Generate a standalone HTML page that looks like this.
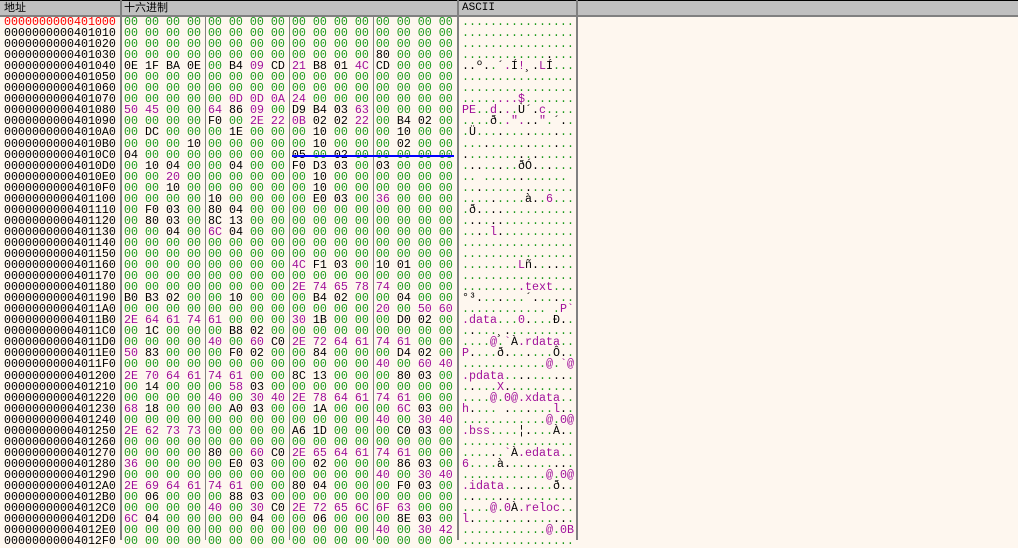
<!DOCTYPE html>
<html><head><meta charset="utf-8"><style>
*{margin:0;padding:0;box-sizing:border-box}
body{width:1018px;height:540px;overflow:hidden;background:#fef7ef;font-family:"Liberation Mono",monospace;font-size:11.67px;position:relative}
.hd{position:absolute;left:0;top:0;width:1018px;height:17px;background:#c0c0c0;border-top:1px solid #000;border-bottom:2px solid #808080}
.hd span{position:absolute;top:0;font-family:"Liberation Sans","Noto Sans CJK SC",sans-serif;font-size:11px;line-height:14px;color:#000}
.vl{position:absolute;top:0;width:1px;background:#808080}
.rows{position:absolute;left:0;top:17px}
.r{height:11.05px;line-height:11px;position:relative;white-space:pre;width:1018px}
.a{position:absolute;left:4px;color:#000}
.h{position:absolute;left:124px;color:#1d9a1d}
.s{position:absolute;left:462px;color:#1d9a1d}
i{font-style:normal;color:#a0109a}
b{font-weight:normal;color:#000}
.red{color:#ff0000}
.ul{position:absolute;left:292px;top:155px;width:162px;height:2px;background:#0000ff}
</style></head><body>
<div class="hd"><span style="left:4px">地址</span><span style="left:124px">十六进制</span><span style="left:462px;font-family:'Liberation Mono',monospace">ASCII</span></div>
<div class="vl" style="left:120px;height:540px;width:2px"></div>
<div class="vl" style="left:457px;height:540px;width:2px"></div>
<div class="vl" style="left:576px;height:540px;width:2px"></div>
<div class="vl" style="left:205px;top:16px;height:524px"></div>
<div class="vl" style="left:289px;top:16px;height:524px"></div>
<div class="vl" style="left:373px;top:16px;height:524px"></div>
<div class="rows">
<div class="r"><span class="a red">0000000000401000</span><span class="h">00 00 00 00 00 00 00 00 00 00 00 00 00 00 00 00</span><span class="s">................</span></div>
<div class="r"><span class="a">0000000000401010</span><span class="h">00 00 00 00 00 00 00 00 00 00 00 00 00 00 00 00</span><span class="s">................</span></div>
<div class="r"><span class="a">0000000000401020</span><span class="h">00 00 00 00 00 00 00 00 00 00 00 00 00 00 00 00</span><span class="s">................</span></div>
<div class="r"><span class="a">0000000000401030</span><span class="h">00 00 00 00 00 00 00 00 00 00 00 00 <b>80</b> 00 00 00</span><span class="s">............<b>.</b>...</span></div>
<div class="r"><span class="a">0000000000401040</span><span class="h"><b>0E 1F BA 0E</b> 00 <b>B4</b> <i>09</i> <b>CD</b> <i>21</i> <b>B8 01</b> <i>4C</i> <b>CD</b> 00 00 00</span><span class="s"><b>..º.</b>.<b>´</b><i>.</i><b>Í</b><i>!</i><b>¸.</b><i>L</i><b>Í</b>...</span></div>
<div class="r"><span class="a">0000000000401050</span><span class="h">00 00 00 00 00 00 00 00 00 00 00 00 00 00 00 00</span><span class="s">................</span></div>
<div class="r"><span class="a">0000000000401060</span><span class="h">00 00 00 00 00 00 00 00 00 00 00 00 00 00 00 00</span><span class="s">................</span></div>
<div class="r"><span class="a">0000000000401070</span><span class="h">00 00 00 00 00 <i>0D 0D 0A 24</i> 00 00 00 00 00 00 00</span><span class="s">.....<i>...$</i>.......</span></div>
<div class="r"><span class="a">0000000000401080</span><span class="h"><i>50 45</i> 00 00 <i>64</i> <b>86</b> <i>09</i> 00 <b>D9 B4 03</b> <i>63</i> 00 00 00 00</span><span class="s"><i>PE</i>..<i>d</i><b>.</b><i>.</i>.<b>Ù´.</b><i>c</i>....</span></div>
<div class="r"><span class="a">0000000000401090</span><span class="h">00 00 00 00 <b>F0</b> 00 <i>2E 22 0B</i> <b>02 02</b> <i>22</i> 00 <b>B4 02</b> 00</span><span class="s">....<b>ð</b>.<i>.".</i><b>..</b><i>"</i>.<b>´.</b>.</span></div>
<div class="r"><span class="a">00000000004010A0</span><span class="h">00 <b>DC</b> 00 00 00 <b>1E</b> 00 00 00 <b>10</b> 00 00 00 <b>10</b> 00 00</span><span class="s">.<b>Ü</b>...<b>.</b>...<b>.</b>...<b>.</b>..</span></div>
<div class="r"><span class="a">00000000004010B0</span><span class="h">00 00 00 <b>10</b> 00 00 00 00 00 <b>10</b> 00 00 00 <b>02</b> 00 00</span><span class="s">...<b>.</b>.....<b>.</b>...<b>.</b>..</span></div>
<div class="r"><span class="a">00000000004010C0</span><span class="h"><b>04</b> 00 00 00 00 00 00 00 <b>05</b> 00 <b>02</b> 00 00 00 00 00</span><span class="s"><b>.</b>.......<b>.</b>.<b>.</b>.....</span></div>
<div class="r"><span class="a">00000000004010D0</span><span class="h">00 <b>10 04</b> 00 00 <b>04</b> 00 00 <b>F0 D3 03</b> 00 <b>03</b> 00 00 00</span><span class="s">.<b>..</b>..<b>.</b>..<b>ðÓ.</b>.<b>.</b>...</span></div>
<div class="r"><span class="a">00000000004010E0</span><span class="h">00 00 <i>20</i> 00 00 00 00 00 00 <b>10</b> 00 00 00 00 00 00</span><span class="s">.. .....<b>.</b>......</span></div>
<div class="r"><span class="a">00000000004010F0</span><span class="h">00 00 <b>10</b> 00 00 00 00 00 00 <b>10</b> 00 00 00 00 00 00</span><span class="s">..<b>.</b>......<b>.</b>......</span></div>
<div class="r"><span class="a">0000000000401100</span><span class="h">00 00 00 00 <b>10</b> 00 00 00 00 <b>E0 03</b> 00 <i>36</i> 00 00 00</span><span class="s">....<b>.</b>....<b>à.</b>.<i>6</i>...</span></div>
<div class="r"><span class="a">0000000000401110</span><span class="h">00 <b>F0 03</b> 00 <b>80 04</b> 00 00 00 00 00 00 00 00 00 00</span><span class="s">.<b>ð.</b>.<b>..</b>..........</span></div>
<div class="r"><span class="a">0000000000401120</span><span class="h">00 <b>80 03</b> 00 <b>8C 13</b> 00 00 00 00 00 00 00 00 00 00</span><span class="s">.<b>..</b>.<b>..</b>..........</span></div>
<div class="r"><span class="a">0000000000401130</span><span class="h">00 00 <b>04</b> 00 <i>6C</i> <b>04</b> 00 00 00 00 00 00 00 00 00 00</span><span class="s">..<b>.</b>.<i>l</i><b>.</b>..........</span></div>
<div class="r"><span class="a">0000000000401140</span><span class="h">00 00 00 00 00 00 00 00 00 00 00 00 00 00 00 00</span><span class="s">................</span></div>
<div class="r"><span class="a">0000000000401150</span><span class="h">00 00 00 00 00 00 00 00 00 00 00 00 00 00 00 00</span><span class="s">................</span></div>
<div class="r"><span class="a">0000000000401160</span><span class="h">00 00 00 00 00 00 00 00 <i>4C</i> <b>F1 03</b> 00 <b>10 01</b> 00 00</span><span class="s">........<i>L</i><b>ñ.</b>.<b>..</b>..</span></div>
<div class="r"><span class="a">0000000000401170</span><span class="h">00 00 00 00 00 00 00 00 00 00 00 00 00 00 00 00</span><span class="s">................</span></div>
<div class="r"><span class="a">0000000000401180</span><span class="h">00 00 00 00 00 00 00 00 <i>2E 74 65 78 74</i> 00 00 00</span><span class="s">........<i>.text</i>...</span></div>
<div class="r"><span class="a">0000000000401190</span><span class="h"><b>B0 B3 02</b> 00 00 <b>10</b> 00 00 00 <b>B4 02</b> 00 00 <b>04</b> 00 00</span><span class="s"><b>°³.</b>..<b>.</b>...<b>´.</b>..<b>.</b>..</span></div>
<div class="r"><span class="a">00000000004011A0</span><span class="h">00 00 00 00 00 00 00 00 00 00 00 00 <i>20</i> 00 <i>50 60</i></span><span class="s">............ .<i>P`</i></span></div>
<div class="r"><span class="a">00000000004011B0</span><span class="h"><i>2E 64 61 74 61</i> 00 00 00 <i>30</i> <b>1B</b> 00 00 00 <b>D0 02</b> 00</span><span class="s"><i>.data</i>...<i>0</i><b>.</b>...<b>Ð.</b>.</span></div>
<div class="r"><span class="a">00000000004011C0</span><span class="h">00 <b>1C</b> 00 00 00 <b>B8 02</b> 00 00 00 00 00 00 00 00 00</span><span class="s">.<b>.</b>...<b>¸.</b>.........</span></div>
<div class="r"><span class="a">00000000004011D0</span><span class="h">00 00 00 00 <i>40</i> 00 <i>60</i> <b>C0</b> <i>2E 72 64 61 74 61</i> 00 00</span><span class="s">....<i>@</i>.<i>`</i><b>À</b><i>.rdata</i>..</span></div>
<div class="r"><span class="a">00000000004011E0</span><span class="h"><i>50</i> <b>83</b> 00 00 00 <b>F0 02</b> 00 00 <b>84</b> 00 00 00 <b>D4 02</b> 00</span><span class="s"><i>P</i><b>.</b>...<b>ð.</b>..<b>.</b>...<b>Ô.</b>.</span></div>
<div class="r"><span class="a">00000000004011F0</span><span class="h">00 00 00 00 00 00 00 00 00 00 00 00 <i>40</i> 00 <i>60 40</i></span><span class="s">............<i>@</i>.<i>`@</i></span></div>
<div class="r"><span class="a">0000000000401200</span><span class="h"><i>2E 70 64 61 74 61</i> 00 00 <b>8C 13</b> 00 00 00 <b>80 03</b> 00</span><span class="s"><i>.pdata</i>..<b>..</b>...<b>..</b>.</span></div>
<div class="r"><span class="a">0000000000401210</span><span class="h">00 <b>14</b> 00 00 00 <i>58</i> <b>03</b> 00 00 00 00 00 00 00 00 00</span><span class="s">.<b>.</b>...<i>X</i><b>.</b>.........</span></div>
<div class="r"><span class="a">0000000000401220</span><span class="h">00 00 00 00 <i>40</i> 00 <i>30 40 2E 78 64 61 74 61</i> 00 00</span><span class="s">....<i>@</i>.<i>0@.xdata</i>..</span></div>
<div class="r"><span class="a">0000000000401230</span><span class="h"><i>68</i> <b>18</b> 00 00 00 <b>A0 03</b> 00 00 <b>1A</b> 00 00 00 <i>6C</i> <b>03</b> 00</span><span class="s"><i>h</i><b>.</b>...<b> .</b>..<b>.</b>...<i>l</i><b>.</b>.</span></div>
<div class="r"><span class="a">0000000000401240</span><span class="h">00 00 00 00 00 00 00 00 00 00 00 00 <i>40</i> 00 <i>30 40</i></span><span class="s">............<i>@</i>.<i>0@</i></span></div>
<div class="r"><span class="a">0000000000401250</span><span class="h"><i>2E 62 73 73</i> 00 00 00 00 <b>A6 1D</b> 00 00 00 <b>C0 03</b> 00</span><span class="s"><i>.bss</i>....<b>¦.</b>...<b>À.</b>.</span></div>
<div class="r"><span class="a">0000000000401260</span><span class="h">00 00 00 00 00 00 00 00 00 00 00 00 00 00 00 00</span><span class="s">................</span></div>
<div class="r"><span class="a">0000000000401270</span><span class="h">00 00 00 00 <b>80</b> 00 <i>60</i> <b>C0</b> <i>2E 65 64 61 74 61</i> 00 00</span><span class="s">....<b>.</b>.<i>`</i><b>À</b><i>.edata</i>..</span></div>
<div class="r"><span class="a">0000000000401280</span><span class="h"><i>36</i> 00 00 00 00 <b>E0 03</b> 00 00 <b>02</b> 00 00 00 <b>86 03</b> 00</span><span class="s"><i>6</i>....<b>à.</b>..<b>.</b>...<b>..</b>.</span></div>
<div class="r"><span class="a">0000000000401290</span><span class="h">00 00 00 00 00 00 00 00 00 00 00 00 <i>40</i> 00 <i>30 40</i></span><span class="s">............<i>@</i>.<i>0@</i></span></div>
<div class="r"><span class="a">00000000004012A0</span><span class="h"><i>2E 69 64 61 74 61</i> 00 00 <b>80 04</b> 00 00 00 <b>F0 03</b> 00</span><span class="s"><i>.idata</i>..<b>..</b>...<b>ð.</b>.</span></div>
<div class="r"><span class="a">00000000004012B0</span><span class="h">00 <b>06</b> 00 00 00 <b>88 03</b> 00 00 00 00 00 00 00 00 00</span><span class="s">.<b>.</b>...<b>..</b>.........</span></div>
<div class="r"><span class="a">00000000004012C0</span><span class="h">00 00 00 00 <i>40</i> 00 <i>30</i> <b>C0</b> <i>2E 72 65 6C 6F 63</i> 00 00</span><span class="s">....<i>@</i>.<i>0</i><b>À</b><i>.reloc</i>..</span></div>
<div class="r"><span class="a">00000000004012D0</span><span class="h"><i>6C</i> <b>04</b> 00 00 00 00 <b>04</b> 00 00 <b>06</b> 00 00 00 <b>8E 03</b> 00</span><span class="s"><i>l</i><b>.</b>....<b>.</b>..<b>.</b>...<b>..</b>.</span></div>
<div class="r"><span class="a">00000000004012E0</span><span class="h">00 00 00 00 00 00 00 00 00 00 00 00 <i>40</i> 00 <i>30 42</i></span><span class="s">............<i>@</i>.<i>0B</i></span></div>
<div class="r"><span class="a">00000000004012F0</span><span class="h">00 00 00 00 00 00 00 00 00 00 00 00 00 00 00 00</span><span class="s">................</span></div>
</div>
<div class="ul"></div>
</body></html>
